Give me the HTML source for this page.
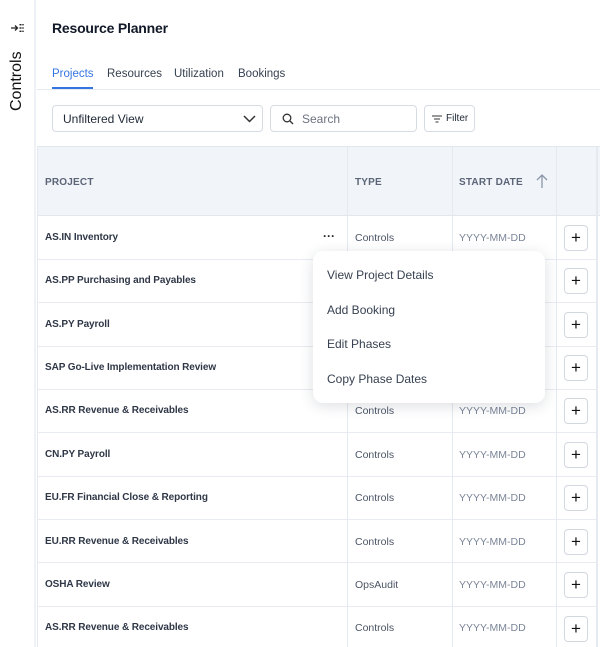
<!DOCTYPE html>
<html><head><style>
*{margin:0;padding:0;box-sizing:border-box}
body{width:600px;height:647px;overflow:hidden;background:#fff;font-family:"Liberation Sans",sans-serif;position:relative;color:#1f2937}
.side{position:absolute;left:0;top:0;width:36px;height:647px;background:#fff;border-right:2px solid #eef1f5}
.ctl{position:absolute;left:-11px;top:74px;transform:rotate(-90deg);font-size:16px;color:#111;width:56px;text-align:center}
.title{position:absolute;left:52px;top:20px;font-size:14px;font-weight:bold;color:#111827;letter-spacing:-.2px}
.tabs{position:absolute;left:52px;top:68px;font-size:11.5px;color:#374151}
.tabs span{position:absolute;white-space:nowrap}
.hdrline{position:absolute;left:37px;top:89px;width:563px;height:1px;background:#e5e9f0}
.box{position:absolute;border:1px solid #d7dce4;border-radius:4px;background:#fff}
.th{position:absolute;top:146px;height:70px;background:#f1f4f8;border-top:1px solid #e2e7ee;border-bottom:1px solid #e2e7ee}
.hl{position:absolute;font-size:10px;font-weight:bold;color:#5b6577;top:177px;letter-spacing:.2px}
.row{position:absolute;left:37px;width:559px;height:1px;background:#e8ecf2}
.vl{position:absolute;width:1px;background:#e5e9f0;top:146px;height:501px}
.pn{position:absolute;left:45px;font-size:10px;font-weight:bold;color:#2f3747;letter-spacing:-.1px}
.ty{position:absolute;left:355px;font-size:10.5px;color:#4b5565}
.dt{position:absolute;left:459px;font-size:10.5px;color:#7b8598}
.plus{position:absolute;left:564px;width:24px;height:26px;border:1px solid #d3d8e0;border-radius:4px;background:#fff;text-align:center;font-size:17px;line-height:24px;color:#111}
.menu{position:absolute;left:313px;top:251px;width:232px;height:152px;background:#fff;border-radius:10px;box-shadow:0 3px 14px rgba(30,40,60,.15)}
.menu div{position:absolute;left:14px;font-size:12px;color:#374151}
</style></head><body>
<div class="side">
<svg style="position:absolute;left:11px;top:23px" width="14" height="10" viewBox="0 0 14 10"><path d="M0 5h6M4 2.5L6.5 5 4 7.5" stroke="#222" stroke-width="1.3" fill="none"/><rect x="8.5" y="1" width="2" height="1.4" fill="#222"/><rect x="8.5" y="4.3" width="2" height="1.4" fill="#222"/><rect x="8.5" y="7.6" width="2" height="1.4" fill="#222"/><rect x="11.3" y="1" width="1.4" height="1.4" fill="#222"/><rect x="11.3" y="4.3" width="1.4" height="1.4" fill="#222"/><rect x="11.3" y="7.6" width="1.4" height="1.4" fill="#222"/></svg>
<div class="ctl">Controls</div>
</div>
<div class="title">Resource Planner</div>
<div class="tabs">
<span style="left:0;color:#3474e0">Projects</span>
<span style="left:55px">Resources</span>
<span style="left:122px">Utilization</span>
<span style="left:186px">Bookings</span>
</div>
<div style="position:absolute;left:52px;top:87px;width:41px;height:2px;background:#3474e0"></div>
<div class="hdrline"></div>
<div class="box" style="left:52px;top:105px;width:211px;height:27px"><span style="position:absolute;left:10px;top:6px;font-size:12px;color:#1f2937">Unfiltered View</span>
<svg style="position:absolute;left:190px;top:9px" width="13" height="8"><path d="M1 1l5.5 5.5L12 1" stroke="#333" stroke-width="1.5" fill="none"/></svg></div>
<div class="box" style="left:270px;top:105px;width:147px;height:27px"><svg style="position:absolute;left:11px;top:7px" width="12" height="12"><circle cx="5" cy="5" r="3.8" stroke="#333" stroke-width="1.3" fill="none"/><path d="M8 8l3 3" stroke="#333" stroke-width="1.3"/></svg><span style="position:absolute;left:31px;top:6px;font-size:12px;color:#6b7280">Search</span></div>
<div class="box" style="left:424px;top:105px;width:51px;height:27px"><svg style="position:absolute;left:7px;top:9px" width="10" height="8"><path d="M0 1h10M2 4h6M3.5 7h3" stroke="#333" stroke-width="1.1"/></svg><span style="position:absolute;left:21px;top:7px;font-size:10px;color:#1f2937">Filter</span></div>
<div class="th" style="left:37px;width:563px"></div>
<div class="hl" style="left:45px">PROJECT</div>
<div class="hl" style="left:355px">TYPE</div>
<div class="hl" style="left:459px">START DATE</div>
<svg style="position:absolute;left:536px;top:174px" width="12" height="14"><path d="M6 14V1M1 6l5-5 5 5" stroke="#8a96a8" stroke-width="1.3" fill="none"/></svg>
<div class="vl" style="left:347px"></div>
<div class="vl" style="left:452px"></div>
<div class="vl" style="left:556px"></div>
<div class="vl" style="left:596px;width:2px"></div>
<div style="position:absolute;left:37px;top:146px;width:1px;height:501px;background:#e5e9f0"></div>
<div class="row" style="top:259px"></div><div class="row" style="top:302px"></div><div class="row" style="top:346px"></div><div class="row" style="top:389px"></div><div class="row" style="top:432px"></div><div class="row" style="top:476px"></div><div class="row" style="top:519px"></div><div class="row" style="top:562px"></div><div class="row" style="top:606px"></div>
<div class="pn" style="top:232px">AS.IN Inventory</div><div class="ty" style="top:232px">Controls</div><div class="dt" style="top:232px">YYYY-MM-DD</div><div class="plus" style="top:225px">+</div>
<div style="position:absolute;left:323px;top:229px;font-size:12px;font-weight:bold;color:#222">···</div>
<div class="pn" style="top:275px">AS.PP Purchasing and Payables</div><div class="plus" style="top:268px">+</div>
<div class="pn" style="top:319px">AS.PY Payroll</div><div class="plus" style="top:312px">+</div>
<div class="pn" style="top:362px">SAP Go-Live Implementation Review</div><div class="plus" style="top:355px">+</div>
<div class="pn" style="top:405px">AS.RR Revenue &amp; Receivables</div><div class="ty" style="top:405px">Controls</div><div class="dt" style="top:405px">YYYY-MM-DD</div><div class="plus" style="top:398px">+</div>
<div class="pn" style="top:449px">CN.PY Payroll</div><div class="ty" style="top:449px">Controls</div><div class="dt" style="top:449px">YYYY-MM-DD</div><div class="plus" style="top:442px">+</div>
<div class="pn" style="top:492px">EU.FR Financial Close &amp; Reporting</div><div class="ty" style="top:492px">Controls</div><div class="dt" style="top:492px">YYYY-MM-DD</div><div class="plus" style="top:485px">+</div>
<div class="pn" style="top:536px">EU.RR Revenue &amp; Receivables</div><div class="ty" style="top:536px">Controls</div><div class="dt" style="top:536px">YYYY-MM-DD</div><div class="plus" style="top:529px">+</div>
<div class="pn" style="top:579px">OSHA Review</div><div class="ty" style="top:579px">OpsAudit</div><div class="dt" style="top:579px">YYYY-MM-DD</div><div class="plus" style="top:572px">+</div>
<div class="pn" style="top:622px">AS.RR Revenue &amp; Receivables</div><div class="ty" style="top:622px">Controls</div><div class="dt" style="top:622px">YYYY-MM-DD</div><div class="plus" style="top:616px">+</div>
<div class="menu">
<div style="top:17px">View Project Details</div>
<div style="top:52px">Add Booking</div>
<div style="top:86px">Edit Phases</div>
<div style="top:121px">Copy Phase Dates</div>
</div>
</body></html>
